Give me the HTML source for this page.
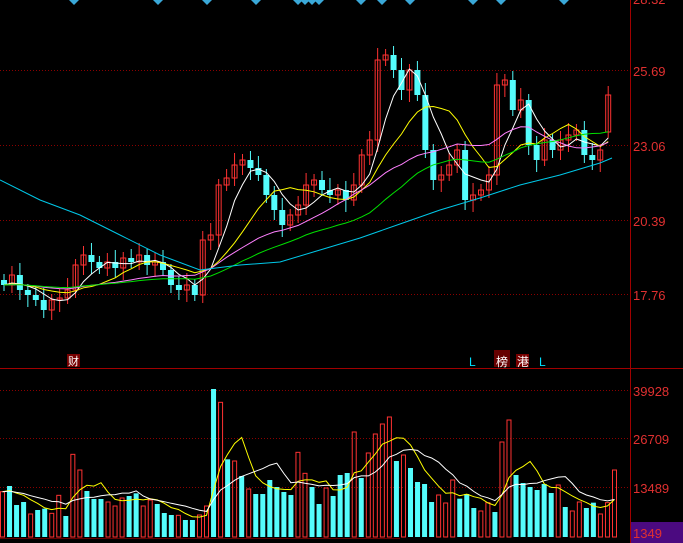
<!DOCTYPE html>
<html><head><meta charset="utf-8"><style>
html,body{margin:0;padding:0;background:#000;width:683px;height:543px;overflow:hidden}
svg{display:block}
text{font-family:"Liberation Sans","Noto Sans CJK SC",sans-serif}
</style></head><body>
<svg id="s" width="683" height="543" xmlns="http://www.w3.org/2000/svg">
<rect width="683" height="543" fill="#000"/>
<g stroke="#8b0000" stroke-dasharray="1,2" stroke-width="1">
<line x1="0" y1="70.5" x2="630" y2="70.5"/><line x1="0" y1="145.5" x2="630" y2="145.5"/>
<line x1="0" y1="220.5" x2="630" y2="220.5"/><line x1="0" y1="294.5" x2="630" y2="294.5"/>
<line x1="0" y1="390.5" x2="630" y2="390.5"/><line x1="0" y1="438.5" x2="630" y2="438.5"/>
<line x1="0" y1="487.5" x2="630" y2="487.5"/>
</g>
<line x1="0" y1="368.5" x2="683" y2="368.5" stroke="#a00000"/>
<line x1="630.5" y1="0" x2="630.5" y2="543" stroke="#a00000"/>
<g fill="#e03030" font-size="13">
<text x="633" y="4">28.32</text>
<text x="633" y="76">25.69</text><text x="633" y="151">23.06</text>
<text x="633" y="226">20.39</text><text x="633" y="300">17.76</text>
<text x="633" y="396">39928</text><text x="633" y="444">26709</text><text x="633" y="493">13489</text>
</g>
<rect x="631" y="522" width="52" height="21" fill="#4b0a80"/>
<text x="633" y="538" fill="#e03030" font-size="13">1349</text>
<g id="tri" fill="#3aa8d8"></g>
<rect x="67" y="354" width="13" height="13" fill="#700"/>
<text x="68" y="365" fill="#fff" font-size="11">财</text>
<text x="469" y="366" fill="#00e0ff" font-size="12">L</text>
<rect x="494" y="350" width="16" height="17" fill="#600"/>
<text x="496" y="366" fill="#fff" font-size="12">榜</text>
<rect x="516" y="354" width="13" height="13" fill="#700"/>
<text x="517" y="366" fill="#fff" font-size="12">港</text>
<text x="539" y="366" fill="#00e0ff" font-size="12">L</text>
<g id="c"></g><g id="v"></g><g id="m"></g>
<rect x="0" y="538" width="630" height="5" fill="#000"/>
<line x1="0" y1="538.5" x2="400" y2="538.5" stroke="#600"/>
</svg>
<script>
var NS="http://www.w3.org/2000/svg";
function el(p,t,a){var e=document.createElementNS(NS,t);for(var k in a)e.setAttribute(k,a[k]);p.appendChild(e);return e;}
var tri=document.getElementById('tri');
[74,158,207,256,298,305,312,319,361,382,410,473,501,564].forEach(function(x){el(tri,'polygon',{points:(x-5)+',0 '+(x+5)+',0 '+x+',5'});});
var cl=[285,275,290,295,300,310,300,298,290,265,255,262,268,262,268,258,262,255,265,262,270,285,290,285,295,240,235,185,178,165,160,168,175,195,210,225,215,205,185,180,190,195,190,200,185,155,140,60,55,70,90,70,95,150,180,175,165,150,200,195,190,175,85,80,110,100,145,160,140,150,140,135,130,155,160,150,95];
var c=document.getElementById('c'),sp=7.95;
for(var i=0;i<cl.length;i++){
 var x=4+i*sp,o=i?cl[i-1]:280,cc=cl[i],up=cc<o;
 if(i==76)o=132;
 var col=up?'#ff3232':'#54fcfc';
 var t=Math.min(o,cc),b=Math.max(o,cc);if(b-t<1)b=t+1;
 el(c,'line',{x1:x,y1:t-6-(i%3)*3,x2:x,y2:b+6+(i%4)*2,stroke:col});
 if(up)el(c,'rect',{x:x-2.5,y:t,width:5,height:b-t,fill:'none',stroke:col});
 else el(c,'rect',{x:x-3,y:t,width:6,height:b-t,fill:col});
}
function ma(a,n){var r=[];for(var i=0;i<a.length;i++){var s=0;for(var j=i-n+1;j<=i;j++)s+=a[Math.max(j,0)];r.push(s/n);}return r;}
var m=document.getElementById('m');
function pl(arr,sx,x0,col){var p=arr.map(function(v,i){return (x0+i*sx).toFixed(1)+','+v.toFixed(1);}).join(' ');el(m,'polyline',{points:p,fill:'none',stroke:col,'stroke-width':1});}
pl(ma(cl,5),sp,4,'#ffffff');pl(ma(cl,10),sp,4,'#ffff00');pl(ma(cl,20),sp,4,'#ff80ff');pl(ma(cl,30),sp,4,'#00e000');
el(m,'polyline',{points:'0,180 40,200 80,215 120,235 160,255 200,270 240,265 280,262 320,250 360,238 400,224 440,210 480,198 520,185 560,175 600,163 612,158',fill:'none',stroke:'#00c8e8'});
var vd="r365 c348 c405 c396 r432 c420 c416 r430 r376 c438 r253 r300 c363 c387 c387 r396 r408 r384 c378 c370 r408 r390 c402 c429 c435 r436 c450 c450 r435 r408 c57 r97 c268 r273 c318 r357 c372 c372 c330 c351 c366 c375 r247 r310 c351 c402 r354 c378 c315 c309 r186 c324 r249 r192 r162 r141 c273 r255 c294 c336 c342 c396 r375 r399 r330 c386 c372 c414 r423 r398 c426 r216 r150 c315 c339 c351 c360 c342 c369 r345 c411 r423 r396 c414 c398 r432 r398 r300".split(' ');
var v=document.getElementById('v'),vs=612/(vd.length-1),tops=[];
vd.forEach(function(d,i){var y=370+parseInt(d.slice(1))/3,x=i*vs;tops.push(y);
 if(d[0]=='r')el(v,'rect',{x:x+0.5,y:y,width:4,height:537-y,fill:'none',stroke:'#ff3232'});
 else el(v,'rect',{x:x,y:y,width:5,height:537-y,fill:'#54fcfc'});});
pl(ma(tops,5),vs,2.5,'#ffff00');pl(ma(tops,10),vs,2.5,'#ffffff');
</script>
</body></html>
